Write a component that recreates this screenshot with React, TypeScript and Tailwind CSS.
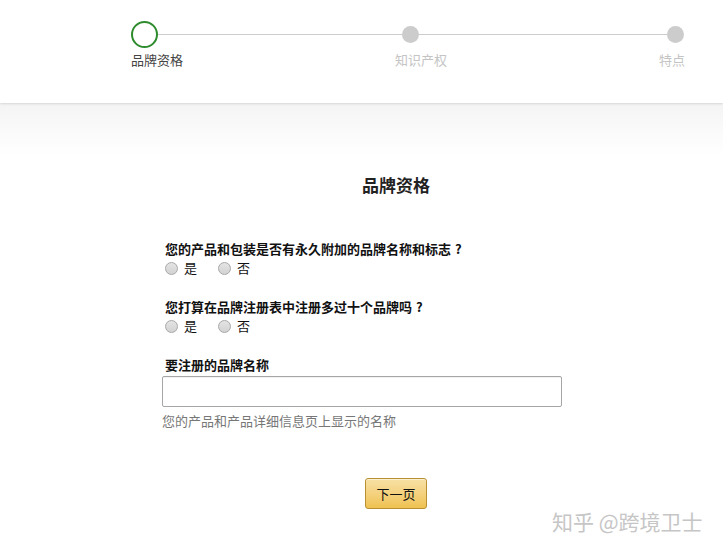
import { useState } from 'react';

const font = { fontFamily: '"Microsoft YaHei", "Noto Sans CJK SC", "Noto Sans", sans-serif' };

function Radio({ label, checked, onClick }: { label: string; checked: boolean; onClick: () => void }) {
  return (
    <label className="flex items-center cursor-pointer" onClick={onClick}>
      <span className="flex h-[13px] w-[13px] items-center justify-center rounded-full border border-[#a8a8a8] bg-gradient-to-b from-[#e4e4e4] to-[#d2d2d2]">
        {checked && <span className="h-[5px] w-[5px] rounded-full bg-[#333]" />}
      </span>
      <span className="ml-[6px] text-[13px] leading-[18px] text-[#111]">{label}</span>
    </label>
  );
}

function Question({ text }: { text: string }) {
  const [value, setValue] = useState<string | null>(null);
  return (
    <div>
      <div className="text-[13px] font-bold leading-[18px] text-[#111]">
        {text}
        <span className="pl-[4px]">?</span>
      </div>
      <div className="mt-[1px] flex gap-[21px]">
        <Radio label="是" checked={value === 'yes'} onClick={() => setValue('yes')} />
        <Radio label="否" checked={value === 'no'} onClick={() => setValue('no')} />
      </div>
    </div>
  );
}

export default function App() {
  return (
    <div className="relative min-h-[552px] w-[723px] overflow-hidden bg-white" style={font}>
      {/* stepper header */}
      <div className="relative z-10 h-[103px] bg-white shadow-[0_1px_2px_rgba(0,0,0,0.12)]">
        <div className="flex items-center pl-[131px] pt-[21px]">
          <span className="h-[27px] w-[27px] rounded-full border-[2px] border-[#2e8b2e] bg-white" />
          <span className="h-px w-[244px] bg-[#cccccc]" />
          <span className="h-[17px] w-[17px] rounded-full bg-[#cccccc]" />
          <span className="h-px w-[248px] bg-[#cccccc]" />
          <span className="h-[17px] w-[17px] rounded-full bg-[#cccccc]" />
        </div>
        <div className="mt-[3px] grid grid-cols-[264px_264px_auto] pl-[131px] text-[13px] leading-[18px]">
          <span className="text-[#444]">品牌资格</span>
          <span className="text-[#c4c4c4]">知识产权</span>
          <span className="text-[#c4c4c4]">特点</span>
        </div>
      </div>
      <div className="h-[52px] bg-gradient-to-b from-[#f4f4f4] to-white" />

      {/* form */}
      <div className="pl-[362px] text-[17px] font-bold leading-[24px] text-[#222] mt-[18px]">品牌资格</div>

      <div className="ml-[165px] mt-[43px] flex flex-col gap-[21px]">
        <Question text="您的产品和包装是否有永久附加的品牌名称和标志" />
        <Question text="您打算在品牌注册表中注册多过十个品牌吗" />
      </div>

      <div className="ml-[162px] mt-[21px]">
        <div className="pl-[3px] text-[13px] font-bold leading-[18px] text-[#111]">要注册的品牌名称</div>
        <input
          type="text"
          className="mt-[2px] block h-[31px] w-[400px] rounded-[2px] border border-[#a6a6a6] bg-white px-2 text-[13px] outline-none shadow-[inset_0_1px_0_rgba(0,0,0,0.05)]"
        />
        <div className="mt-[5px] text-[13px] leading-[18px] text-[#777]">您的产品和产品详细信息页上显示的名称</div>
      </div>

      <div className="ml-[365px] mt-[48px]">
        <button
          type="button"
          className="flex h-[31px] w-[62px] items-center justify-center rounded-[3px] border border-[#b8902f] bg-gradient-to-b from-[#f8e1a6] to-[#efc24f] text-[13px] text-[#111] shadow-[inset_0_1px_0_rgba(255,255,255,0.5)]"
        >
          下一页
        </button>
      </div>

      {/* watermark */}
      <div className="absolute left-[552px] top-[507px] text-[21px] leading-[28px] text-[#c6c6c6] [text-shadow:0_0_1px_rgba(255,255,255,0.9)]">
        知乎 @跨境卫士
      </div>
    </div>
  );
}
